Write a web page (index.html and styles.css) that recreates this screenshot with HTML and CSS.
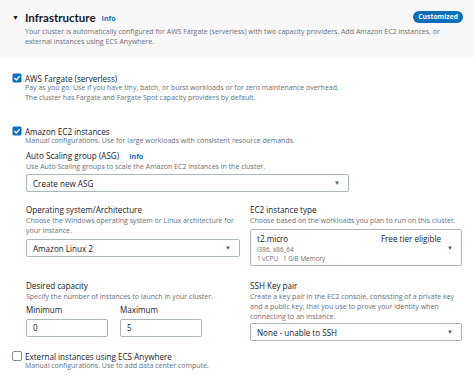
FILE: index.html
```html
<!DOCTYPE html>
<html lang="en">
<head>
    <meta charset="UTF-8">
    <meta name="viewport" content="width=device-width, initial-scale=1.0">
    <title>Infrastructure</title>
    <link rel="stylesheet" href="styles.css">
</head>
<body>
    <div class="panel">
        <!-- 头部 -->
        <div class="panel-head">
            <div class="head-row">
                <span class="caret">▼</span>
                <h2 class="head-title">Infrastructure</h2>
                <a href="#" class="info">Info</a>
                <span class="badge">Customized</span>
            </div>
            <p class="head-desc">Your cluster is automatically configured for AWS Fargate (serverless) with two capacity providers. Add Amazon EC2 instances, or external instances using ECS Anywhere.</p>
        </div>

        <!-- Fargate -->
        <div class="option opt-fargate">
            <div class="check-row">
                <svg class="check" viewBox="0 0 10 10"><rect x="0.5" y="0.5" width="9" height="9" rx="1.5" fill="#0a6fc2"/><path d="M2.4 5.1 L4.3 7 L7.7 3.1" fill="none" stroke="#fff" stroke-width="1.4"/></svg>
                <span class="check-label">AWS Fargate (serverless)</span>
            </div>
            <p class="desc indent">Pay as you go. Use if you have tiny, batch, or burst workloads or for zero maintenance overhead.<br>The cluster has Fargate and Fargate Spot capacity providers by default.</p>
        </div>

        <!-- EC2 -->
        <div class="option opt-ec2">
            <div class="check-row">
                <svg class="check" viewBox="0 0 10 10"><rect x="0.5" y="0.5" width="9" height="9" rx="1.5" fill="#0a6fc2"/><path d="M2.4 5.1 L4.3 7 L7.7 3.1" fill="none" stroke="#fff" stroke-width="1.4"/></svg>
                <span class="check-label">Amazon EC2 instances</span>
            </div>
            <p class="desc indent">Manual configurations. Use for large workloads with consistent resource demands.</p>

            <div class="fields">
                <div class="field field-asg">
                    <div class="label">Auto Scaling group (ASG) <a href="#" class="info info-sm">Info</a></div>
                    <p class="desc">Use Auto Scaling groups to scale the Amazon EC2 instances in the cluster.</p>
                    <div class="select select-asg">
                        <span>Create new ASG</span>
                        <span class="arrow">▼</span>
                    </div>
                </div>

                <div class="grid">
                    <div class="field">
                        <div class="label">Operating system/Architecture</div>
                        <p class="desc">Choose the Windows operating system or Linux architecture for your instance.</p>
                        <div class="select">
                            <span>Amazon Linux 2</span>
                            <span class="arrow">▼</span>
                        </div>
                    </div>
                    <div class="field">
                        <div class="label">EC2 instance type</div>
                        <p class="desc">Choose based on the workloads you plan to run on this cluster.</p>
                        <div class="select select-tall">
                            <div class="tall-main">
                                <div class="tall-top">
                                    <span>t2.micro</span>
                                    <span>Free tier eligible</span>
                                </div>
                                <div class="tall-sub">i386, x86_64</div>
                                <div class="tall-sub">1 vCPU&nbsp;&nbsp;&nbsp;1 GiB Memory</div>
                            </div>
                            <span class="arrow">▼</span>
                        </div>
                    </div>

                    <div class="field field-cap">
                        <div class="label">Desired capacity</div>
                        <p class="desc">Specify the number of instances to launch in your cluster.</p>
                        <div class="cap-row">
                            <div class="cap">
                                <div class="label">Minimum</div>
                                <div class="input">0</div>
                            </div>
                            <div class="cap">
                                <div class="label">Maximum</div>
                                <div class="input">5</div>
                            </div>
                        </div>
                    </div>
                    <div class="field field-cap">
                        <div class="label">SSH Key pair</div>
                        <p class="desc">Create a key pair in the EC2 console, consisting of a private key and a public key, that you use to prove your identity when connecting to an instance.</p>
                        <div class="select select-ssh">
                            <span>None - unable to SSH</span>
                            <span class="arrow">▼</span>
                        </div>
                    </div>
                </div>
            </div>
        </div>

        <!-- ECS Anywhere -->
        <div class="option opt-ext">
            <div class="check-row">
                <svg class="check" viewBox="0 0 10 10"><rect x="0.5" y="0.5" width="9" height="9" rx="1.5" fill="#fff" stroke="#7d8998" stroke-width="1"/></svg>
                <span class="check-label">External instances using ECS Anywhere</span>
            </div>
            <p class="desc indent">Manual configurations. Use to add data center compute.</p>
        </div>
    </div>
</body>
</html>
```

FILE: styles.css
```css
body {
    margin: 0;
    background: #fff;
    font-family: "Open Sans", "Liberation Sans", sans-serif;
    color: #16191f;
}
p {
    margin: 0;
}
.panel {
    width: 474px;
}
/* 头部 */
.panel-head {
    background: #f8f8f8;
    height: 57px;
    box-sizing: border-box;
    padding: 9px 10px 0 12px;
}
.head-row {
    display: flex;
    align-items: center;
    height: 16px;
}
.caret {
    font-size: 7px;
    width: 13px;
    color: #16191f;
}
.head-title {
    margin: 0;
    font-family: Lato, "Open Sans", sans-serif;
    font-size: 11.5px;
    font-weight: 700;
}
.info {
    color: #0a6fc2;
    font-size: 7px;
    font-weight: 700;
    text-decoration: none;
    margin-left: 6px;
    margin-top: 2px;
}
.badge {
    margin-left: auto;
    margin-right: 1px;
    background: #0a6eb9;
    color: #fff;
    font-size: 6.8px;
    font-weight: 700;
    padding: 1px 5px;
    border-radius: 7px;
    line-height: 10px;
}
.head-desc {
    font-size: 7px;
    line-height: 10px;
    color: #687078;
    margin-top: 2px;
    padding-left: 13px;
}
/* 选项 */
.option {
    padding-left: 12px;
}
.opt-fargate {
    margin-top: 16px;
}
.opt-ec2 {
    margin-top: 23px;
}
.opt-ext {
    margin-top: 10px;
}
.check-row {
    display: flex;
    align-items: center;
    height: 10px;
}
.check {
    width: 10px;
    height: 10px;
    margin-right: 3px;
}
.check-label {
    font-size: 8.1px;
}
.desc {
    font-size: 7px;
    line-height: 10px;
    color: #687078;
}
.indent {
    padding-left: 13px;
}
/* 表单字段 */
.fields {
    padding-left: 14px;
    margin-top: 4px;
}
.label {
    font-size: 8.1px;
    line-height: 12px;
}
.field-asg .label {
    line-height: 11px;
}
.info-sm {
    margin-left: 8px;
}
.select {
    display: flex;
    align-items: center;
    justify-content: space-between;
    height: 18px;
    box-sizing: border-box;
    border: 1px solid #aab7b8;
    border-radius: 2px;
    padding: 0 8px 0 6px;
    font-size: 8.1px;
    margin-top: 2px;
}
.select-asg {
    width: 323px;
}
.arrow {
    font-size: 6px;
    color: #545b64;
}
.grid {
    display: grid;
    grid-template-columns: 214px 212px;
    column-gap: 10px;
    align-items: start;
    margin-top: 12px;
}
.grid .select {
    margin-top: 3px;
}
.grid .select-ssh {
    margin-top: 1px;
}
.select-tall {
    height: 37px;
    padding-top: 1px;
}
.tall-main {
    flex: 1;
    margin-right: 6px;
}
.tall-top {
    display: flex;
    justify-content: space-between;
    line-height: 12px;
}
.tall-sub {
    font-size: 6.4px;
    line-height: 9px;
    color: #687078;
}
.field-cap {
    margin-top: 14px;
}
.cap-row {
    display: flex;
    gap: 12px;
    margin-top: 2px;
}
.input {
    width: 82px;
    height: 18px;
    box-sizing: border-box;
    border: 1px solid #aab7b8;
    border-radius: 2px;
    padding-left: 6px;
    font-size: 8.1px;
    line-height: 16px;
    margin-top: 3px;
}
```
